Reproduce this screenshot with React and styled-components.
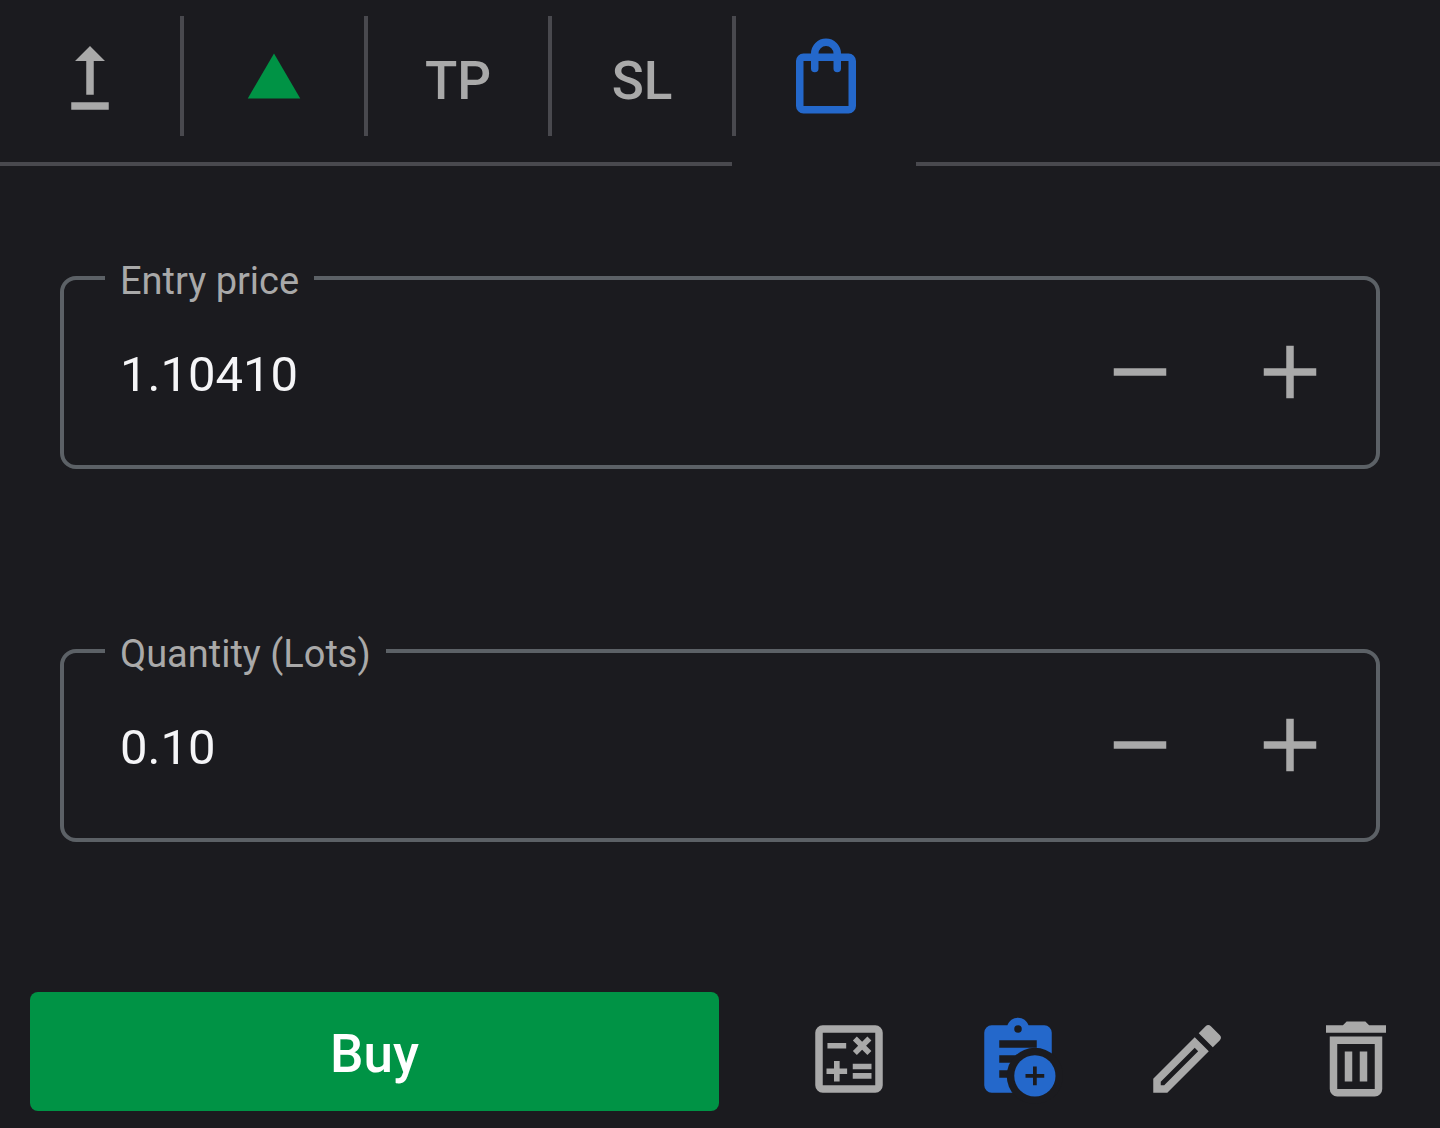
import { useState } from "react";
import styled, { ThemeProvider, createGlobalStyle } from "styled-components";

const theme = {
  colors: {
    background: "#1b1b1f",
    text: "#f5f5f7",
    muted: "#a9a9a9",
    divider: "#49494e",
    outline: "#5c6166",
    primary: "#2468cb",
    buy: "#009345",
  },
};

const GlobalStyle = createGlobalStyle`
  *, *::before, *::after {
    box-sizing: border-box;
  }
  body {
    margin: 0;
    background: ${({ theme }) => theme.colors.background};
    color: ${({ theme }) => theme.colors.text};
    font-family: Roboto, "Liberation Sans", sans-serif;
  }
  button, input {
    font: inherit;
    color: inherit;
    border: 0;
    padding: 0;
    margin: 0;
    background: none;
  }
  button {
    cursor: pointer;
  }
`;

const Page = styled.div`
  min-height: 100vh;
  display: flex;
  flex-direction: column;
`;

const TabBar = styled.nav`
  display: flex;

  &::after {
    content: "";
    flex: 1;
    border-bottom: 4px solid ${({ theme }) => theme.colors.divider};
  }
`;

const Tab = styled.button`
  padding: 16px 0 26px;
  border-bottom: 4px solid
    ${({ $active, theme }) => ($active ? "transparent" : theme.colors.divider)};
  color: ${({ $color, theme }) => theme.colors[$color]};
`;

const TabInner = styled.span`
  display: flex;
  align-items: center;
  justify-content: center;
  width: 184px;
  height: 120px;
  border-left: 4px solid ${({ theme }) => theme.colors.divider};

  ${Tab}:first-child & {
    width: 180px;
    border-left: 0;
  }
`;

const TabText = styled.span`
  padding-top: 10px;
  font-size: 53px;
  line-height: 64px;
  font-weight: 500;
`;

const Icon = styled.svg.attrs({ viewBox: "0 0 24 24", "aria-hidden": true })`
  display: block;
  width: 90px;
  height: 90px;
  fill: currentColor;
`;

const Form = styled.main`
  flex: 1;
  display: flex;
  flex-direction: column;
  gap: 158px;
  padding: 88px 60px 0;
`;

const FieldBox = styled.fieldset`
  min-width: 0;
  margin: 0;
  padding: 25px 41px 48px;
  border: 4px solid ${({ theme }) => theme.colors.outline};
  border-radius: 16px;
`;

const Legend = styled.legend`
  padding: 6px 15px 0;
  color: ${({ theme }) => theme.colors.muted};
  font-size: 38px;
  line-height: 42px;
`;

const FieldRow = styled.div`
  display: flex;
  align-items: center;
  gap: 60px;
  padding-left: 15px;
`;

const ValueInput = styled.input`
  flex: 1;
  min-width: 0;
  height: 90px;
  padding-top: 4px;
  font-size: 49px;
  outline: none;
`;

const StepButton = styled.button`
  color: ${({ theme }) => theme.colors.muted};
`;

const Footer = styled.footer`
  display: flex;
  gap: 46px;
  padding: 0 0 17px 30px;
`;

const BuyButton = styled.button`
  flex: 1;
  height: 119px;
  padding-top: 4px;
  border-radius: 8px;
  background: ${({ theme }) => theme.colors.buy};
  color: #fff;
  font-size: 53px;
  font-weight: 500;
`;

const Tools = styled.div`
  display: grid;
  grid-template-columns: repeat(4, 1fr);
  align-items: center;
  justify-items: center;
  width: 675px;
  padding-top: 15px;
`;

const ToolButton = styled.button`
  color: ${({ $active, theme }) =>
    $active ? theme.colors.primary : theme.colors.muted};
`;

const Cutout = styled.g`
  fill: ${({ theme }) => theme.colors.background};
`;

const ArrowUpIcon = () => (
  <Icon>
    <path d="M12 4l4 4h-3v9h-2V8H8zM7 19h10v2H7z" />
  </Icon>
);

const TriangleIcon = () => (
  <Icon>
    <path d="M12 6l7 12H5z" />
  </Icon>
);

const BagIcon = () => (
  <Icon>
    <path
      fillRule="evenodd"
      d="M6 6h12a2 2 0 0 1 2 2v12a2 2 0 0 1-2 2H6a2 2 0 0 1-2-2V8a2 2 0 0 1 2-2zM6 8v12h12V8z"
    />
    <path
      d="M9 10V6a3 3 0 0 1 6 0v4"
      fill="none"
      stroke="currentColor"
      strokeWidth="2"
      strokeLinecap="round"
    />
  </Icon>
);

const MinusIcon = () => (
  <Icon>
    <path d="M5 11h14v2H5z" />
  </Icon>
);

const PlusIcon = () => (
  <Icon>
    <path d="M19 13h-6v6h-2v-6H5v-2h6V5h2v6h6z" />
  </Icon>
);

const CalculatorIcon = () => (
  <Icon>
    <path
      fillRule="evenodd"
      d="M5 3h14a2 2 0 0 1 2 2v14a2 2 0 0 1-2 2H5a2 2 0 0 1-2-2V5a2 2 0 0 1 2-2zM5 5v14h14V5z"
    />
    <path d="M6.25 7.72h5v1.5h-5zM13 15.75h5v1.5h-5zM13 13.25h5v1.5h-5zM8 18h1.5v-2h2v-1.5h-2v-2H8v2H6V16h2zM14.09 10.95l1.41-1.41 1.41 1.41 1.06-1.06-1.41-1.42 1.41-1.41L16.91 6 15.5 7.41 14.09 6l-1.06 1.06 1.41 1.41-1.41 1.42z" />
  </Icon>
);

const ClipboardPlusIcon = () => (
  <Icon>
    <path d="M19 3h-4.18C14.4 1.84 13.3 1 12 1s-2.4.84-2.82 2H5a2 2 0 0 0-2 2v14a2 2 0 0 0 2 2h14a2 2 0 0 0 2-2V5a2 2 0 0 0-2-2z" />
    <Cutout>
      <circle cx="12" cy="4" r="1" />
      <path d="M7 7h10v2H7zM7 11h8v2H7zM7 15h5v2H7z" />
      <circle cx="16.5" cy="16.5" r="7.5" />
    </Cutout>
    <circle cx="16.5" cy="16.5" r="5.5" />
    <Cutout>
      <path d="M16 14h1v2h2v1h-2v2h-1v-2h-2v-1h2z" />
    </Cutout>
  </Icon>
);

const PencilIcon = () => (
  <Icon>
    <path
      fillRule="evenodd"
      d="M3 17.25V21h3.75L17.81 9.94l-3.75-3.75zM5.92 19H5v-.92l9.06-9.06.92.92zM20.71 5.63l-2.34-2.34a1 1 0 0 0-1.41 0l-1.83 1.83 3.75 3.75 1.83-1.83a1 1 0 0 0 0-1.41z"
    />
  </Icon>
);

const TrashIcon = () => (
  <Icon>
    <path d="M15.5 3l-1-1h-5l-1 1H4v2h16V3zM9 10h2v8H9zM13 10h2v8h-2z" />
    <path
      fillRule="evenodd"
      d="M5 6h14v14a2 2 0 0 1-2 2H7a2 2 0 0 1-2-2zM7 8v12h10V8z"
    />
  </Icon>
);

const tabs = [
  { id: "entry", label: "Entry", color: "muted", icon: <ArrowUpIcon /> },
  { id: "side", label: "Side", color: "buy", icon: <TriangleIcon /> },
  { id: "tp", label: "Take profit", color: "muted", text: "TP" },
  { id: "sl", label: "Stop loss", color: "muted", text: "SL" },
  { id: "order", label: "Order", color: "primary", icon: <BagIcon /> },
];

const tools = [
  { id: "calculator", label: "Calculator", icon: <CalculatorIcon /> },
  { id: "add", label: "Add order", icon: <ClipboardPlusIcon />, active: true },
  { id: "edit", label: "Edit", icon: <PencilIcon /> },
  { id: "delete", label: "Delete", icon: <TrashIcon /> },
];

const NumberField = ({ id, label, initial, step, digits }) => {
  const [value, setValue] = useState(initial);

  const change = (delta) => {
    const next = Math.max(0, (parseFloat(value) || 0) + delta);
    setValue(next.toFixed(digits));
  };

  return (
    <FieldBox>
      <Legend>
        <label htmlFor={id}>{label}</label>
      </Legend>
      <FieldRow>
        <ValueInput
          id={id}
          type="text"
          inputMode="decimal"
          value={value}
          onChange={(e) => setValue(e.target.value)}
        />
        <StepButton
          type="button"
          aria-label={`Decrease ${label}`}
          onClick={() => change(-step)}
        >
          <MinusIcon />
        </StepButton>
        <StepButton
          type="button"
          aria-label={`Increase ${label}`}
          onClick={() => change(step)}
        >
          <PlusIcon />
        </StepButton>
      </FieldRow>
    </FieldBox>
  );
};

const App = () => {
  const [activeTab, setActiveTab] = useState("order");

  return (
    <ThemeProvider theme={theme}>
      <GlobalStyle />
      <Page>
        <TabBar>
          {tabs.map(({ id, label, color, icon, text }) => (
            <Tab
              key={id}
              type="button"
              aria-label={label}
              aria-pressed={activeTab === id}
              $active={activeTab === id}
              $color={color}
              onClick={() => setActiveTab(id)}
            >
              <TabInner>{icon || <TabText>{text}</TabText>}</TabInner>
            </Tab>
          ))}
        </TabBar>

        <Form>
          <NumberField
            id="entry-price"
            label="Entry price"
            initial="1.10410"
            step={0.0001}
            digits={5}
          />
          <NumberField
            id="quantity"
            label="Quantity (Lots)"
            initial="0.10"
            step={0.01}
            digits={2}
          />
        </Form>

        <Footer>
          <BuyButton type="button">Buy</BuyButton>
          <Tools>
            {tools.map(({ id, label, icon, active }) => (
              <ToolButton
                key={id}
                type="button"
                aria-label={label}
                $active={active}
              >
                {icon}
              </ToolButton>
            ))}
          </Tools>
        </Footer>
      </Page>
    </ThemeProvider>
  );
};

export default App;
